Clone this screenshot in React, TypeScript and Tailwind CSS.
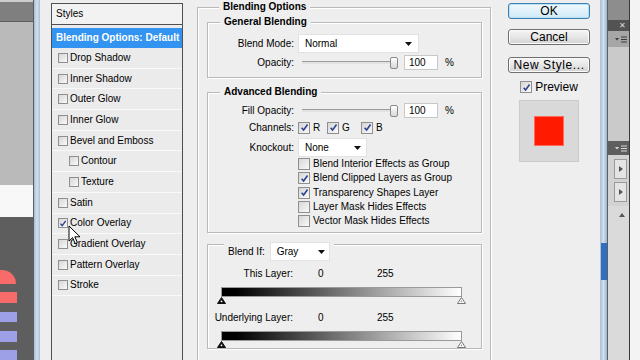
import React from "react";

const styleItems = [
  { label: "Drop Shadow" },
  { label: "Inner Shadow" },
  { label: "Outer Glow" },
  { label: "Inner Glow" },
  { label: "Bevel and Emboss" },
  { label: "Contour", sub: true },
  { label: "Texture", sub: true },
  { label: "Satin" },
  { label: "Color Overlay", on: true },
  { label: "Gradient Overlay" },
  { label: "Pattern Overlay" },
  { label: "Stroke" },
];

const advancedChecks = [
  { label: "Blend Interior Effects as Group", on: false },
  { label: "Blend Clipped Layers as Group", on: true },
  { label: "Transparency Shapes Layer", on: true },
  { label: "Layer Mask Hides Effects", on: false },
  { label: "Vector Mask Hides Effects", on: false },
];

function Check({ on = false, small = false }: { on?: boolean; small?: boolean }) {
  return (
    <span
      className={`flex shrink-0 items-center justify-center border border-[#8f8f8f] bg-gradient-to-br from-[#d6d6d6] to-[#fafafa] ${
        small ? "h-[10px] w-[10px]" : "h-[12px] w-[12px]"
      }`}
    >
      {on && (
        <svg viewBox="0 0 10 10" className="h-[9px] w-[9px]">
          <path d="M1.8 5.2 4 7.8 8.4 1.6" fill="none" stroke="#2b3f8e" strokeWidth="1.7" />
        </svg>
      )}
    </span>
  );
}

function Arrow() {
  return (
    <svg width="7" height="4" viewBox="0 0 7 4">
      <path d="M0 0h7L3.5 4z" fill="#111" />
    </svg>
  );
}

function Select({ value, className }: { value: string; className: string }) {
  return (
    <div className={`flex h-[19px] items-center justify-between border border-[#e2e2e2] bg-white pl-[6px] ${className}`}>
      <span>{value}</span>
      <Arrow />
    </div>
  );
}

function Group({ title, className, children }: { title: string; className: string; children?: React.ReactNode }) {
  return (
    <div className={`border border-[#b9b9b9] shadow-[inset_1px_1px_0_#fff,1px_1px_0_#fff] ${className}`}>
      <div className="-mt-[7px] ml-[12px] w-fit bg-[#eeeeee] px-[4px] font-bold leading-[12px]">{title}</div>
      {children}
    </div>
  );
}

function SliderRow({ label }: { label: string }) {
  return (
    <div className="flex h-[15px] items-center">
      <span className="w-[86px] text-right">{label}</span>
      <div className="ml-[4px] flex w-[100px] items-center pl-[4px]">
        <div className="h-[3px] flex-1 border-t border-[#9a9a9a] bg-[#e2e2e2]" />
        <div className="-ml-[3px] h-[12px] w-[8px] rounded-[2px] border border-[#8a8a8a] bg-gradient-to-b from-white to-[#d8d8d8]" />
      </div>
      <div className="ml-[6px] h-[15px] w-[34px] border border-[#c8c8c8] bg-white pl-[4px] leading-[13px]">100</div>
      <span className="ml-[7px]">%</span>
    </div>
  );
}

function Marker({ dark = false }: { dark?: boolean }) {
  return (
    <svg width="9" height="7" viewBox="0 0 9 7">
      <path
        d="M4.5 0.5 8.5 6.5H0.5Z"
        fill={dark ? "#111" : "#fff"}
        stroke={dark ? "#111" : "#777"}
        strokeWidth="1"
        strokeLinejoin="round"
      />
      <circle cx="4.5" cy="4.3" r="0.9" fill={dark ? "#fff" : "#999"} />
    </svg>
  );
}

function BlendBar({ label }: { label: string }) {
  return (
    <>
      <div className="flex h-[12px] items-center">
        <span className="w-[85px] text-right">{label}</span>
        <span className="ml-[25px] w-[59px]">0</span>
        <span>255</span>
      </div>
      <div className="ml-[13px] mt-[7px] h-[10px] w-[241px] border border-[#9a9a9a] bg-[linear-gradient(to_right,#000_0%,#000_6%,#fff_100%)]" />
      <div className="ml-[9px] flex h-[7px] w-[249px] items-start justify-between">
        <Marker dark />
        <Marker />
      </div>
    </>
  );
}

function Workspace() {
  return (
    <div className="flex w-[33px] shrink-0 flex-col">
      <div className="h-[2px] bg-[#cdcdcd]" />
      <div className="h-[20px] border-b border-[#5d5d5d] bg-[#7f7f7f]" />
      <div className="h-[166px] bg-[#bababa]" />
      <div className="h-[32px] bg-[#f8f8f8]" />
      <div className="flex flex-1 flex-col bg-[#5e5e5e] pt-[53px]">
        <div className="-ml-[16px] h-[14px] w-[32px] rounded-t-full bg-[#f76b6b]" />
        <div className="mt-[8px] h-[11px] w-[17px] bg-[#f76b6b]" />
        <div className="mt-[9px] h-[10px] w-[17px] bg-[#9da0e6]" />
        <div className="mt-[9px] h-[11px] w-[17px] bg-[#9da0e6]" />
        <div className="mt-[8px] h-[10px] w-[17px] bg-[#9da0e6]" />
      </div>
    </div>
  );
}

function MenuIcon({ light = false }: { light?: boolean }) {
  const c = light ? "#d8d8d8" : "#3a3a3a";
  return (
    <svg width="12" height="7" viewBox="0 0 12 7">
      <path d="M0 2h4L2 4.5z" fill={c} />
      <path d="M6 1h6M6 3.5h6M6 6h6" stroke={c} strokeWidth="1" />
    </svg>
  );
}

function RightPanel() {
  return (
    <div className="flex w-[32px] shrink-0">
      <div className="flex w-[22px] flex-col border-r border-[#3a3a3a]">
        <div className="h-[20px] bg-[#8d8d8d]" />
        <div className="flex h-[11px] items-center justify-end bg-[#535353] pr-[3px] text-[8px] leading-none text-[#dcdcdc]">
          ✕
        </div>
        <div className="flex h-[16px] items-center justify-end bg-[#a6a6a6] pr-[2px]">
          <MenuIcon />
        </div>
        <div className="h-[94px] bg-[#cacaca]" />
        <div className="flex h-[14px] items-center justify-end bg-[#5e5e5e] pr-[2px]">
          <MenuIcon light />
        </div>
        <div className="flex flex-col items-center gap-[3px] bg-[#d2d2d2] py-[4px] pl-[4px]">
          {[0, 1].map((i) => (
            <div
              key={i}
              className="flex h-[20px] w-[13px] items-center justify-center border border-[#9a9a9a] bg-[#e4e4e4]"
            >
              <svg width="4" height="6" viewBox="0 0 4 6">
                <path d="M0 0 4 3 0 6z" fill="#555" />
              </svg>
            </div>
          ))}
        </div>
        <div className="flex flex-1 flex-col items-end bg-[#dadada] pr-[4px] pt-[7px]">
          <svg width="6" height="4" viewBox="0 0 6 4">
            <path d="M0 4 3 0 6 4z" fill="#555" />
          </svg>
        </div>
      </div>
      <div className="flex-1 bg-[#f3f3f3]" />
    </div>
  );
}

function StylesPanel() {
  return (
    <div className="mt-[3px] h-[380px] w-[132px] shrink-0 border border-[#505050] bg-[#ebebeb]">
      <div className="flex h-[21px] items-center border-b border-[#505050] bg-[#f2f2f2] pl-[4px]">Styles</div>
      <div className="mt-[3px] flex h-[20px] items-center bg-[#3393f0] pl-[4px] font-bold text-white">
        Blending Options: Default
      </div>
      {styleItems.map((s) => (
        <div
          key={s.label}
          className={`flex h-[20.7px] items-center gap-[2px] border-b border-[#f9f9f9] ${
            s.sub ? "pl-[17px]" : "pl-[6px]"
          }`}
        >
          <Check small on={s.on} />
          <span>{s.label}</span>
        </div>
      ))}
    </div>
  );
}

function MainPanel() {
  return (
    <Group title="Blending Options" className="ml-[14px] mt-[7px] h-[380px] w-[294px] shrink-0 pl-[9px]">
      <Group title="General Blending" className="mt-[9px] w-[275px] pb-[7px]">
        <div className="mt-[6px] flex h-[19px] items-center">
          <span className="w-[86px] text-right">Blend Mode:</span>
          <Select value="Normal" className="ml-[4px] w-[121px] pr-[6px]" />
        </div>
        <div className="mt-[2px]">
          <SliderRow label="Opacity:" />
        </div>
      </Group>

      <Group title="Advanced Blending" className="mt-[14px] w-[275px] pb-[4px]">
        <div className="mt-[5px]">
          <SliderRow label="Fill Opacity:" />
        </div>
        <div className="mt-[3px] flex h-[13px] items-center">
          <span className="w-[86px] text-right">Channels:</span>
          <div className="ml-[4px] flex items-center">
            <span className="flex w-[29px] items-center gap-[3px]">
              <Check on />R
            </span>
            <span className="flex w-[34px] items-center gap-[3px]">
              <Check on />G
            </span>
            <span className="flex items-center gap-[3px]">
              <Check on />B
            </span>
          </div>
        </div>
        <div className="mt-[4px] flex h-[19px] items-center">
          <span className="w-[86px] text-right">Knockout:</span>
          <Select value="None" className="ml-[4px] w-[69px] pr-[5px]" />
        </div>
        {advancedChecks.map((c) => (
          <div key={c.label} className="flex h-[14.3px] items-center gap-[3px] pl-[90px]">
            <Check on={c.on} />
            <span>{c.label}</span>
          </div>
        ))}
      </Group>

      <div className="mt-[11px] w-[275px] border border-[#b9b9b9] shadow-[inset_1px_1px_0_#fff,1px_1px_0_#fff]">
        <div className="-mt-[3px] ml-[16px] flex w-fit items-center bg-[#eeeeee] px-[4px]">
          <span>Blend If:</span>
          <Select value="Gray" className="ml-[5px] w-[60px] pr-[4px]" />
        </div>
        <div className="mt-[7px]">
          <BlendBar label="This Layer:" />
        </div>
        <div className="mt-[8px]">
          <BlendBar label="Underlying Layer:" />
        </div>
      </div>
    </Group>
  );
}

function Btn({ children, primary = false, className = "" }: { children: React.ReactNode; primary?: boolean; className?: string }) {
  return (
    <button
      type="button"
      className={`flex h-[16px] w-[82px] items-center justify-center rounded-[3px] border text-[12px] leading-[14px] ${
        primary
          ? "border-[#3c7fb1] bg-gradient-to-b from-[#f2f9fd] to-[#cfe9f8] shadow-[inset_0_0_0_1px_#b9e0f6]"
          : "border-[#707070] bg-gradient-to-b from-[#f5f5f5] via-[#e7e7e7] to-[#d2d2d2] shadow-[inset_0_0_0_1px_#fbfbfb]"
      } ${className}`}
    >
      {children}
    </button>
  );
}

function Actions() {
  return (
    <div className="ml-[17px] mt-[3px] flex w-[82px] shrink-0 flex-col items-center">
      <Btn primary>OK</Btn>
      <Btn className="mt-[10px]">Cancel</Btn>
      <Btn className="mt-[12px] tracking-[0.6px]">New Style...</Btn>
      <div className="mt-[8px] flex h-[12px] items-center gap-[3px] text-[12px]">
        <Check on />
        <span>Preview</span>
      </div>
      <div className="mt-[7px] flex h-[62px] w-[60px] items-center justify-center border border-[#cbcbcb] bg-[#d9d9d9]">
        <div className="h-[30px] w-[30px] border border-[#ff6a5a] bg-[#ff1a00]" />
      </div>
    </div>
  );
}

function Cursor() {
  return (
    <svg className="absolute left-[68px] top-[225px]" width="13" height="20" viewBox="0 0 13 20">
      <path d="M1 1v15l3.6-3.4 2.6 6 2.2-1-2.6-5.8H12z" fill="#fff" stroke="#000" strokeWidth="1" strokeLinejoin="round" />
    </svg>
  );
}

export default function App() {
  return (
    <div className="relative flex h-[360px] w-[640px] overflow-hidden bg-[#eeeeee] font-['Liberation_Sans',Arial,sans-serif] text-[10px] leading-[12px] text-black">
      <Workspace />
      <div className="w-[7px] shrink-0 border-l border-[#56616e] bg-gradient-to-r from-[#a7bbd0] via-[#d5e2ee] to-[#aabed3]" />
      <div className="flex w-[560px] shrink-0 items-start pl-[11px]">
        <StylesPanel />
        <MainPanel />
        <Actions />
      </div>
      <div className="flex w-[8px] shrink-0 flex-col border-r border-[#56616e] bg-gradient-to-r from-[#aabed3] via-[#d2dfec] to-[#9fb4ca]">
        <div className="ml-[1px] mt-[243px] h-[37px] bg-[#2f6fbd]" />
      </div>
      <RightPanel />
      <Cursor />
    </div>
  );
}
